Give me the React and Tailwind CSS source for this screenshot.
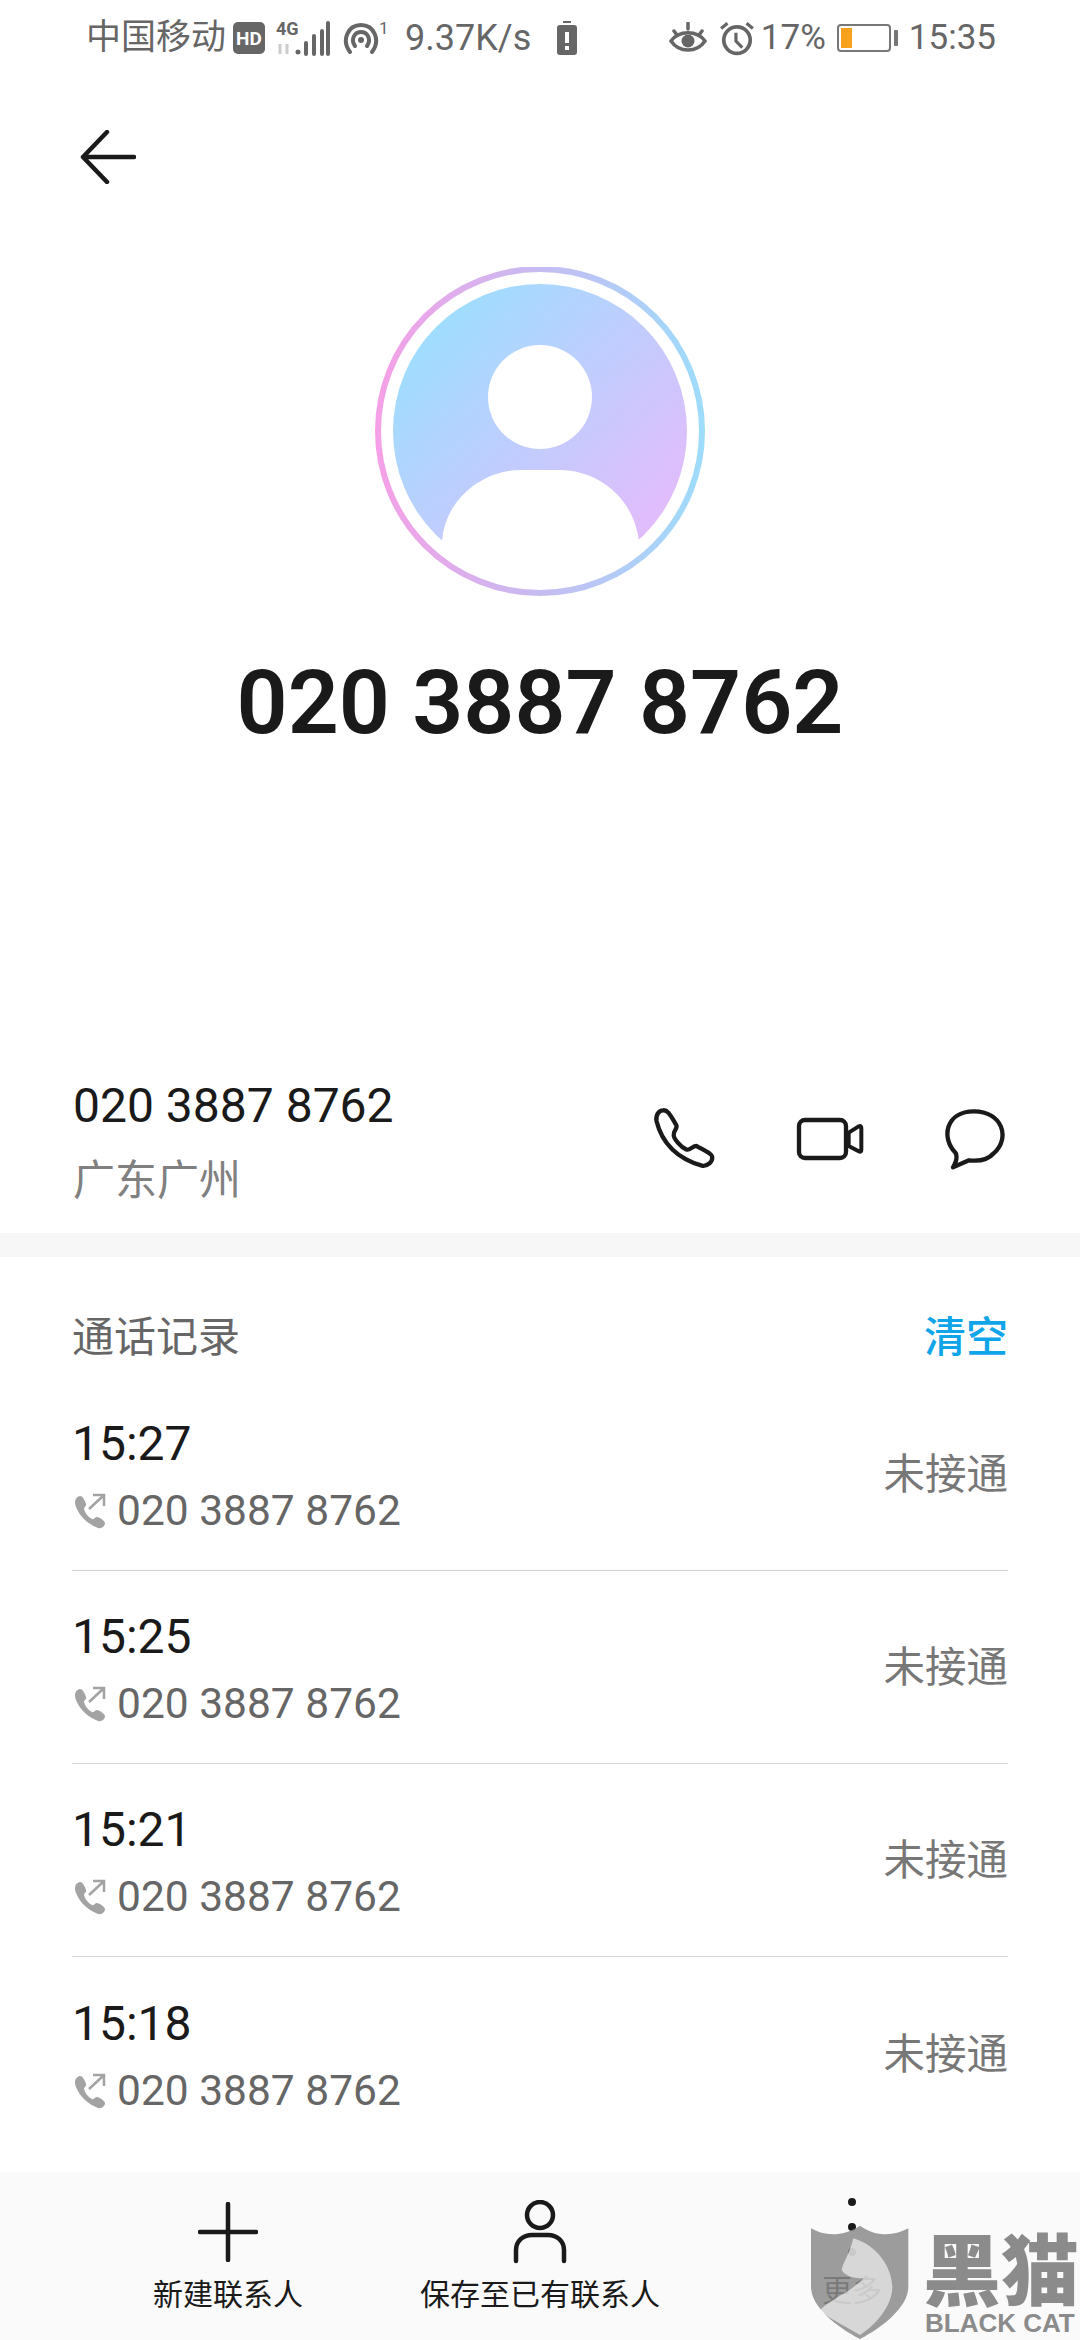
const calls = ["15:27", "15:25", "15:21", "15:18"];

const StatusBar = () => (
    <div className="h-[76px] flex items-center pl-[86px] pr-[84px] text-[#666] text-[35px] leading-[44px]">
        <span>中国移动</span>
        <svg width="32" height="32" viewBox="0 0 32 32" className="ml-[7px]">
            <rect width="32" height="32" rx="5" fill="#666" />
            <text x="16" y="23" textAnchor="middle" fontSize="19" fontWeight="700" fill="#fff" fontFamily="Roboto">HD</text>
        </svg>
        <svg width="54" height="36" viewBox="0 0 54 36" className="ml-[11px]">
            <text x="0" y="15" fontSize="18" fontWeight="700" fill="#666" fontFamily="Roboto">4G</text>
            <path d="M4 24v10M11 24v10" stroke="#ccc" strokeWidth="3" fill="none" />
            <circle cx="22" cy="32" r="2.5" fill="#666" />
            <path d="M30 34v-11M38 34v-18M46 34v-23M52 34v-31" stroke="#666" strokeWidth="4" strokeLinecap="round" />
        </svg>
        <svg width="46" height="36" viewBox="0 0 46 36" className="ml-[12px]">
            <path d="M8 32C-1 20 6 5 19 5s20 15 11 27" stroke="#666" strokeWidth="4" fill="none" strokeLinecap="round" />
            <path d="M13 26c-5-7 0-14 6-14s11 7 6 14" stroke="#666" strokeWidth="4" fill="none" strokeLinecap="round" />
            <circle cx="19" cy="20" r="3" fill="#666" />
            <text x="37" y="14" fontSize="17" fill="#666" fontFamily="Roboto">1</text>
        </svg>
        <span className="ml-[17px] w-[124px] text-[36px]">9.37K/s</span>
        <svg width="20" height="34" viewBox="0 0 20 34" className="ml-[28px]">
            <rect x="0" y="4" width="20" height="30" rx="3" fill="#666" />
            <rect x="6" y="0" width="8" height="2" fill="#666" />
            <rect x="8" y="11" width="4" height="11" fill="#fff" />
            <rect x="8" y="25" width="4" height="4" fill="#fff" />
        </svg>
        <div className="ml-auto flex items-center">
            <svg width="40" height="32" viewBox="0 0 38 32">
                <path d="M2 19C10 8 28 8 36 19C28 31 10 31 2 19Z" stroke="#666" strokeWidth="3.5" fill="none" />
                <circle cx="19" cy="19" r="6.5" fill="#666" />
                <path d="M5 9l3 4M19 1v6M33 9l-3 4" stroke="#666" strokeWidth="3.5" strokeLinecap="round" />
            </svg>
            <svg width="36" height="36" viewBox="0 0 34 34" className="ml-[11px]">
                <circle cx="17" cy="19" r="12.5" stroke="#666" strokeWidth="3.5" fill="none" />
                <path d="M16 12v8l6 6" stroke="#666" strokeWidth="3" fill="none" />
                <path d="M2 8l6-5M32 8l-6-5" stroke="#666" strokeWidth="3" />
            </svg>
            <span className="ml-[6px] text-[35px]">17%</span>
            <div className="ml-[11px] flex items-center gap-[3px]">
                <div className="w-[54px] h-[28px] border-2 border-[#777] rounded-[4px] p-[2px]">
                    <div className="w-[11px] h-full bg-[#f8a11c]" />
                </div>
                <div className="w-[4px] h-[16px] bg-[#777] rounded-[1px]" />
            </div>
            <span className="ml-[11px]">15:35</span>
        </div>
    </div>
)

const Avatar = () => (
    <svg width="330" height="330" viewBox="375 267 330 330" className="mx-auto mt-[81px]">
        <defs>
            <linearGradient id="ring" x1="0" y1="0" x2="1" y2="0">
                <stop offset="0" stopColor="#f5a0e6" />
                <stop offset="0.5" stopColor="#c6bcf2" />
                <stop offset="1" stopColor="#9edcfc" />
            </linearGradient>
            <linearGradient id="disc" x1="0.1" y1="0.1" x2="0.9" y2="0.85">
                <stop offset="0" stopColor="#9bdfff" />
                <stop offset="1" stopColor="#e4bbfc" />
            </linearGradient>
            <clipPath id="inner">
                <circle cx="540" cy="431" r="148" />
            </clipPath>
        </defs>
        <circle cx="540" cy="431" r="162" fill="none" stroke="url(#ring)" strokeWidth="6" />
        <circle cx="540" cy="431" r="147" fill="url(#disc)" />
        <circle cx="540" cy="397" r="52" fill="#fff" />
        <path d="M442 542C445 497 485 470 520 470H560C597 470 634 497 639 542V600H442Z" fill="#fff" clipPath="url(#inner)" />
    </svg>
)

const CallRow = ({ time, last }) => (
    <div className={`h-[193px] pt-[3px] flex items-center justify-between ${last ? "" : "border-b border-[#d2d2d2]"}`}>
        <div className="pt-[2px]">
            <div className="text-[48px] leading-[52px] text-[#1a1a1a]">{time}</div>
            <div className="mt-[17px] flex items-center">
                <svg width="32" height="36" viewBox="0 0 32 36" className="ml-[2px]">
                    <path d="M6 3C1 4 0 9 2 14C6 24 14 31 24 35C28 36 31 33 31 30C31 28 25 24 23 24C21 24 20 27 18 26C14 24 11 20 10 16C10 14 13 13 12 11C11 8 9 3 6 3Z" fill="#a3a3a3" />
                    <path d="M15 16L29 3M19 2H30V13" stroke="#a3a3a3" strokeWidth="2.5" fill="none" />
                </svg>
                <span className="ml-[11px] text-[42.5px] leading-[48px] text-[#666]">020 3887 8762</span>
            </div>
        </div>
        <span className="text-[41.5px] text-[#777]">未接通</span>
    </div>
)

const BottomBar = () => (
    <div className="h-[168px] bg-[#fafafa] px-[72px] grid grid-cols-3 text-[30px] leading-[36px] text-[#1a1a1a] text-center">
        <div className="flex flex-col items-center pt-[30px]">
            <svg width="60" height="60" viewBox="0 0 60 60">
                <path d="M30 2V58M2 30H58" stroke="#1a1a1a" strokeWidth="4.5" strokeLinecap="round" />
            </svg>
            <span className="mt-[15px]">新建联系人</span>
        </div>
        <div className="flex flex-col items-center pt-[28px]">
            <svg width="56" height="64" viewBox="0 0 56 64">
                <circle cx="28" cy="15" r="13" stroke="#1a1a1a" strokeWidth="4.5" fill="none" />
                <path d="M4 61V50C4 41 11 35 20 35H36C45 35 52 41 52 50V61" stroke="#1a1a1a" strokeWidth="4.5" fill="none" strokeLinecap="round" />
            </svg>
            <span className="mt-[13px] whitespace-nowrap">保存至已有联系人</span>
        </div>
        <div className="flex flex-col items-center pt-[26px]">
            <div className="flex flex-col gap-[17px] h-[68px]">
                <div className="w-[8px] h-[8px] rounded-full bg-[#1a1a1a]" />
                <div className="w-[8px] h-[8px] rounded-full bg-[#1a1a1a]" />
                <div className="w-[8px] h-[8px] rounded-full bg-[#1a1a1a]" />
            </div>
            <span className="mt-[7px]">更多</span>
        </div>
    </div>
)

const Watermark = () => (
    <div className="absolute left-[760px] top-[2170px] w-[320px] h-[170px] overflow-hidden">
        <svg width="320" height="170" viewBox="0 0 960 510" className="absolute left-0 top-0">
            <path d="M153 175C195 200 250 200 300 167C345 200 400 200 445 175V350C445 410 370 470 300 507C230 470 153 410 153 350Z" fill="#8b8b8b" fillOpacity="0.85" />
            <path d="M280 205C350 225 395 290 397 350C397 410 345 465 300 495C250 465 205 445 180 420C215 385 275 365 310 325C285 325 255 320 245 300C250 275 270 250 280 205Z" fill="#fff" fillOpacity="0.6" />
        </svg>
        <div className="absolute left-[163px] top-[56px] text-[78px] leading-[80px] font-black text-[#8b8b8b] whitespace-nowrap [font-family:'Noto_Sans_CJK_SC',sans-serif]">黑猫</div>
        <div className="absolute left-[165px] top-[139px] text-[26px] leading-[28px] font-bold text-[#8b8b8b] whitespace-nowrap [font-family:'Liberation_Sans',sans-serif]">BLACK CAT</div>
    </div>
)

const App = () => {
    return (
        <div className="relative w-[1080px] h-[2340px] overflow-hidden bg-white [font-family:Roboto,'Noto_Sans_CJK_SC',sans-serif]">
            <StatusBar />

            {/* header */}
            <div className="h-[110px] pl-[80px] pt-[54px]">
                <svg width="56" height="54" viewBox="0 0 56 54">
                    <path d="M54 27H3M27 2L3 27L27 52" stroke="#1a1a1a" strokeWidth="4.5" fill="none" strokeLinecap="round" strokeLinejoin="round" />
                </svg>
            </div>
            <Avatar />
            <h1 className="mt-[56px] text-center text-[89.5px] leading-[100px] font-semibold text-[#1a1a1a]">020 3887 8762</h1>

            {/* contact row */}
            <div className="mt-[299px] h-[181px] px-[73px] flex items-center justify-between">
                <div>
                    <div className="text-[48px] leading-[56px] text-[#1a1a1a]">020 3887 8762</div>
                    <div className="mt-[20px] text-[42px] leading-[54px] text-[#808080]">广东广州</div>
                </div>
                <div className="flex items-center pr-[2px] pb-[8px] gap-[78px]">
                    <svg width="65" height="63" viewBox="95 80 195 190">
                        <path d="M128 90C115 90 105 105 108 122C125 190 170 235 245 257C262 260 278 245 276 230C275 222 265 218 228 197C218 197 208 212 198 208C180 200 160 175 160 165C158 152 172 145 168 135C150 105 142 88 128 90Z" stroke="#1a1a1a" strokeWidth="13" fill="none" strokeLinejoin="round" />
                    </svg>
                    <svg width="70" height="44" viewBox="522 108 204 132">
                        <rect x="531" y="117" width="141" height="114" rx="18" stroke="#1a1a1a" strokeWidth="13" fill="none" />
                        <path d="M680 155L710 136Q718 132 718 141V206Q718 215 710 211L680 195Z" stroke="#1a1a1a" strokeWidth="12" fill="none" strokeLinejoin="round" />
                    </svg>
                    <svg width="62" height="62" viewBox="962 80 186 186">
                        <path d="M1000 215C955 170 970 90 1055 90C1140 90 1165 170 1115 215C1095 238 1065 240 1040 237L992 258C1003 240 1006 228 1000 215Z" stroke="#1a1a1a" strokeWidth="13" fill="none" strokeLinejoin="round" />
                    </svg>
                </div>
            </div>

            <div className="h-[24px] bg-[#f7f7f7]" />

            {/* call log */}
            <div className="px-[72px]">
                <div className="h-[121px] pt-[59px] flex justify-between text-[42px] leading-[44px]">
                    <span className="text-[#666]">通话记录</span>
                    <span className="text-[#10a5e8] font-medium">清空</span>
                </div>
                {calls.map((time, i) => (
                    <CallRow key={time} time={time} last={i === calls.length - 1} />
                ))}
            </div>

            <div className="absolute left-0 right-0 bottom-0">
                <BottomBar />
            </div>
            <Watermark />
        </div>
    )
}

export default App
